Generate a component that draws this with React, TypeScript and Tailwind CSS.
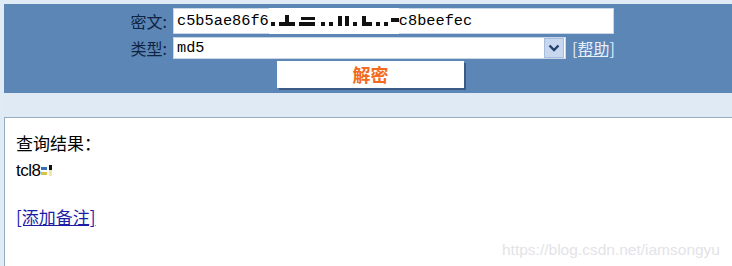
import React from "react";

const cjk = "font-['SimSun','Noto_Sans_CJK_SC',sans-serif]";
const mono = "font-['Liberation_Mono','Noto_Sans_CJK_SC',monospace]";

// black censor marks over the middle of the hash
const Redacted: React.FC = () => (
  <svg width="130" height="26" viewBox="0 0 130 26" className="block">
    <rect x="0" y="0" width="130" height="26" fill="#fff" />
    <rect x="2" y="14" width="4" height="4" fill="#111" />
    <rect x="16" y="7" width="4" height="8" fill="#111" />
    <rect x="10" y="14" width="16" height="4" fill="#111" />
    <rect x="32" y="9" width="14" height="3" fill="#111" />
    <rect x="30" y="14" width="16" height="4" fill="#111" />
    <rect x="52" y="14" width="4" height="4" fill="#111" />
    <rect x="60" y="14" width="4" height="4" fill="#111" />
    <rect x="69" y="8" width="4" height="10" fill="#111" />
    <rect x="76" y="8" width="4" height="10" fill="#111" />
    <rect x="84" y="14" width="4" height="4" fill="#111" />
    <rect x="93" y="8" width="4" height="10" fill="#111" />
    <rect x="93" y="14" width="10" height="4" fill="#111" />
    <rect x="107" y="14" width="4" height="4" fill="#111" />
    <rect x="115" y="14" width="4" height="4" fill="#111" />
    <rect x="122" y="10" width="8" height="4" fill="#111" />
  </svg>
);

const App: React.FC = () => {
  return (
    <div className="w-[732px] h-[266px] bg-[#e0ebf5] pt-[4px] pl-[4px] flex flex-col overflow-hidden relative">
      <div className="h-[89px] bg-[#5b86b6] pt-[4px] flex flex-col">
        <div className="flex items-center h-[26px]">
          <div className={`w-[163px] text-right text-[16px] text-[#0f2444] ${cjk}`}>
            密文:
          </div>
          <div className={`ml-[6px] w-[441px] h-[26px] bg-white border border-[#c9d6e6] flex items-center pl-[3px] text-[15.3px] text-black ${mono}`}>
            <span>c5b5ae86f6</span>
            <Redacted />
            <span>c8beefec</span>
          </div>
        </div>
        <div className="flex items-center h-[22px] mt-[3px]">
          <div className={`w-[163px] text-right text-[16px] text-[#0f2444] ${cjk}`}>
            类型:
          </div>
          <div className={`ml-[6px] w-[393px] h-[22px] bg-white border border-[#c9d6e6] flex items-center justify-between pl-[3px] text-[15.3px] text-black ${mono}`}>
            <span>md5</span>
            <div className="w-[20px] h-[20px] bg-[#c6d7ef] border border-[#a8bddc] flex items-center justify-center mr-[1px]">
              <svg width="12" height="8" viewBox="0 0 12 8">
                <path d="M1.5 1.5 L6 6 L10.5 1.5" fill="none" stroke="#24406e" strokeWidth="2.4" />
              </svg>
            </div>
          </div>
          <a className={`ml-[6px] text-[16px] text-[#e6eefa] underline ${cjk}`}>[帮助]</a>
        </div>
        <div className="pl-[273px] mt-[2px]">
          <div className="w-[187px] h-[27px] bg-white shadow-[2px_2px_0_#3b5b86] flex items-center justify-center">
            <span className={`text-[18px] font-bold text-[#f26a1b] ${cjk}`}>解密</span>
          </div>
        </div>
      </div>
      <div className="h-[24px] bg-[#dfeaf5]" />
      <div className="flex-1 bg-white border-l border-t border-[#97abc2] pl-[11px] pt-[11px] font-['Noto_Sans_CJK_SC','Liberation_Sans',sans-serif] text-[17px] text-black leading-[28px]">
        <div>查询结果：</div>
        <div className="flex items-center">
          <span className="font-['Liberation_Sans',sans-serif] text-[17px] tracking-[-0.5px]">tcl8</span>
          <svg width="12" height="12" viewBox="0 0 12 12" className="ml-[1px]">
            <rect x="0" y="2" width="6" height="3" fill="#3b6fb3" />
            <rect x="0" y="7" width="6" height="3" fill="#d8c04a" />
            <rect x="8" y="0" width="3" height="5" fill="#111" />
            <rect x="8" y="5" width="3" height="6" fill="#f2e7a6" />
          </svg>
        </div>
        <div className="mt-[18px]">
          <a className="text-[#1c1ca8] underline">[添加备注]</a>
        </div>
      </div>
      <div className="absolute left-[502px] top-[238px] text-[15.5px] text-[#e3e3e8] font-['Liberation_Sans',sans-serif] whitespace-nowrap">
        https://blog.csdn.net/iamsongyu
      </div>
    </div>
  );
};

export default App;
